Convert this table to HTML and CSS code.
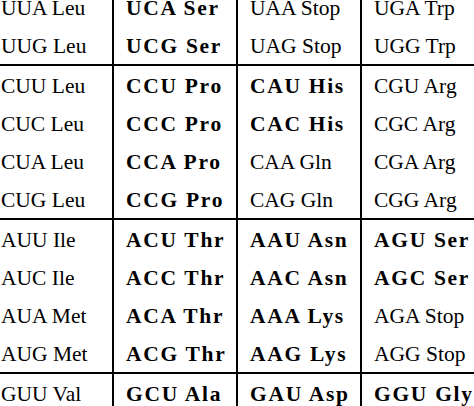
FILE: index.html
```html
<!DOCTYPE html>
<html lang="en">
<head>
<meta charset="utf-8">
<title>Codon table</title>
<link rel="stylesheet" href="styles.css">
</head>
<body>
<table class="codons">
  <colgroup>
    <col class="w1"><col class="w2"><col class="w3"><col class="w4">
  </colgroup>
  <tbody>
    <tr><td>UUA Leu</td><td class="b">UCA Ser</td><td>UAA Stop</td><td>UGA Trp</td></tr>
    <tr class="end"><td>UUG Leu</td><td class="b">UCG Ser</td><td>UAG Stop</td><td>UGG Trp</td></tr>
  </tbody>
  <tbody>
    <tr><td>CUU Leu</td><td class="b">CCU Pro</td><td class="b">CAU His</td><td>CGU Arg</td></tr>
    <tr><td>CUC Leu</td><td class="b">CCC Pro</td><td class="b">CAC His</td><td>CGC Arg</td></tr>
    <tr><td>CUA Leu</td><td class="b">CCA Pro</td><td>CAA Gln</td><td>CGA Arg</td></tr>
    <tr class="end"><td>CUG Leu</td><td class="b">CCG Pro</td><td>CAG Gln</td><td>CGG Arg</td></tr>
  </tbody>
  <tbody>
    <tr><td>AUU Ile</td><td class="b">ACU Thr</td><td class="b">AAU Asn</td><td class="b">AGU Ser</td></tr>
    <tr><td>AUC Ile</td><td class="b">ACC Thr</td><td class="b">AAC Asn</td><td class="b">AGC Ser</td></tr>
    <tr><td>AUA Met</td><td class="b">ACA Thr</td><td class="b">AAA Lys</td><td>AGA Stop</td></tr>
    <tr class="end"><td>AUG Met</td><td class="b">ACG Thr</td><td class="b">AAG Lys</td><td>AGG Stop</td></tr>
  </tbody>
  <tbody>
    <tr><td>GUU Val</td><td class="b">GCU Ala</td><td class="b">GAU Asp</td><td class="b">GGU Gly</td></tr>
  </tbody>
</table>
</body>
</html>
```
FILE: styles.css
```css
html, body {
  margin: 0;
  padding: 0;
  background: #ffffff;
  overflow: hidden;
}

.codons {
  margin: -12px 0 0 -11px;
  border-collapse: separate;
  border-spacing: 0;
  table-layout: fixed;
  width: 500px;
  font-family: "Liberation Serif", "Times New Roman", serif;
  font-size: 21.5px;
  color: #000000;
}

.w1 { width: 125px; }
.w2 { width: 124px; }
.w3 { width: 124px; }
.w4 { width: 127px; }

.codons td {
  box-sizing: border-box;
  padding: 3px 0 0 12px;
  line-height: 35px;
  white-space: nowrap;
  vertical-align: top;
  border-right: 2px solid #000000;
}

.codons td:last-child {
  border-right: none;
}

.codons tr.end td {
  border-bottom: 2px solid #000000;
}

.codons td.b {
  font-weight: bold;
  letter-spacing: 1.7px;
}
```
